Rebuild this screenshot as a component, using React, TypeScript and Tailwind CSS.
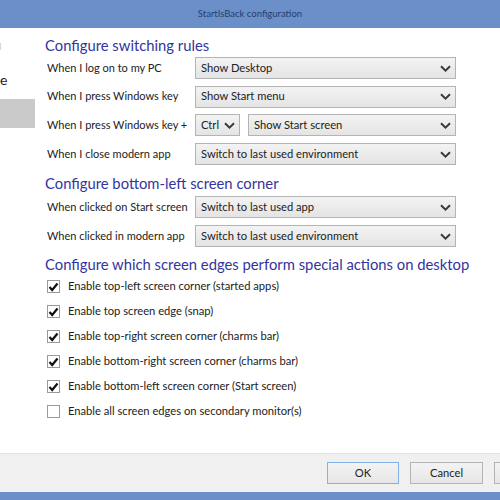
import { ReactNode } from 'react';

const FONT = { fontFamily: 'Lato, "Noto Sans", sans-serif' };

function Chevron() {
  return (
    <svg width="11" height="7" viewBox="0 0 11 7" className="shrink-0">
      <path d="M1 1.2 L5.5 5.6 L10 1.2" fill="none" stroke="#3a3a3a" strokeWidth="2" />
    </svg>
  );
}

function Select({ value, className = '' }: { value: string; className?: string }) {
  return (
    <div
      className={`h-[22px] flex items-center justify-between pl-[5px] pr-[4px] border border-[#b4b4b4] bg-gradient-to-b from-[#f3f3f3] to-[#e4e4e4] text-[11.2px] text-[#222] ${className}`}>
      <span className="whitespace-nowrap">{value}</span>
      <Chevron />
    </div>
  );
}

function Row({ label, children }: { label: string; children: ReactNode }) {
  return (
    <div className="flex items-center h-[22px]">
      <span className="w-[150px] pl-[2px] text-[11px] text-[#222] whitespace-nowrap">{label}</span>
      <div className="flex gap-[8px] w-[261px]">{children}</div>
    </div>
  );
}

function Heading({ children, className = '' }: { children: ReactNode; className?: string }) {
  return (
    <h2 className={`h-[20px] leading-[20px] text-[14.8px] text-[#34349c] whitespace-nowrap ${className}`}>
      {children}
    </h2>
  );
}

function Check({ label, checked }: { label: string; checked: boolean }) {
  return (
    <div className="flex items-center h-[25px] pl-[2px]">
      <div className="w-[13px] h-[13px] border border-[#9a9a9a] bg-white flex items-center justify-center">
        {checked && (
          <svg width="11" height="10" viewBox="0 0 11 10">
            <path d="M1.5 5 L4.2 8 L9.5 1.5" fill="none" stroke="#111" strokeWidth="2.2" />
          </svg>
        )}
      </div>
      <span className="ml-[8px] text-[11.2px] text-[#222] whitespace-nowrap">{label}</span>
    </div>
  );
}

const EDGES = [
  { label: 'Enable top-left screen corner (started apps)', checked: true },
  { label: 'Enable top screen edge (snap)', checked: true },
  { label: 'Enable top-right screen corner (charms bar)', checked: true },
  { label: 'Enable bottom-right screen corner (charms bar)', checked: true },
  { label: 'Enable bottom-left screen corner (Start screen)', checked: true },
  { label: 'Enable all screen edges on secondary monitor(s)', checked: false },
];

export default function App() {
  return (
    <div className="w-[500px] h-[500px] flex flex-col bg-white overflow-hidden" style={FONT}>
      {/* title bar */}
      <div className="h-[28px] shrink-0 bg-[#6b8fc8] flex items-center justify-center">
        <span className="text-[9.5px] text-[#24406e]">StartIsBack configuration</span>
      </div>

      <div className="flex-1 flex">
        {/* left nav, mostly cut off */}
        <div className="w-[35px] shrink-0 flex flex-col text-[14px] text-[#222]">
          <div className="h-[15px]" />
          <div className="w-px h-[7px] bg-[#d6d6d6]" />
          <div className="h-[22px]" />
          <div className="h-[16px] leading-[16px]">e</div>
          <div className="h-[11px]" />
          <div className="h-[29px] bg-[#cacaca]" />
        </div>

        {/* main content */}
        <div className="flex-1 pl-[10px] pt-[7px] flex flex-col">
          <Heading>Configure switching rules</Heading>
          <div className="mt-[2px] flex flex-col gap-[6.7px]">
            <Row label="When I log on to my PC">
              <Select value="Show Desktop" className="flex-1" />
            </Row>
            <Row label="When I press Windows key">
              <Select value="Show Start menu" className="flex-1" />
            </Row>
            <Row label="When I press Windows key +">
              <Select value="Ctrl" className="w-[45px]" />
              <Select value="Show Start screen" className="flex-1" />
            </Row>
            <Row label="When I close modern app">
              <Select value="Switch to last used environment" className="flex-1" />
            </Row>
          </div>

          <Heading className="mt-[8px]">Configure bottom-left screen corner</Heading>
          <div className="mt-[3px] flex flex-col gap-[7px]">
            <Row label="When clicked on Start screen">
              <Select value="Switch to last used app" className="flex-1" />
            </Row>
            <Row label="When clicked in modern app">
              <Select value="Switch to last used environment" className="flex-1" />
            </Row>
          </div>

          <Heading className="mt-[7px]">Configure which screen edges perform special actions on desktop</Heading>
          <div className="flex flex-col">
            {EDGES.map((e) => (
              <Check key={e.label} label={e.label} checked={e.checked} />
            ))}
          </div>
        </div>
      </div>

      {/* footer */}
      <div className="h-[39px] shrink-0 bg-[#f0f0f0] border-t border-[#e2e2e2] flex items-start pt-[8px] pl-[327px] gap-[11px]">
        <button className="w-[72px] h-[22px] shrink-0 border border-[#7fb2e5] bg-gradient-to-b from-[#f3f3f3] to-[#e6e6e6] text-[11.2px] text-[#222]">
          OK
        </button>
        <button className="w-[73px] h-[22px] shrink-0 border border-[#b4b4b4] bg-gradient-to-b from-[#f3f3f3] to-[#e6e6e6] text-[11.2px] text-[#222]">
          Cancel
        </button>
        <button className="w-[73px] h-[22px] shrink-0 border border-[#b4b4b4] bg-gradient-to-b from-[#f3f3f3] to-[#e6e6e6]" />
      </div>
      <div className="h-[8px] shrink-0 bg-[#6b8fc8]" />
    </div>
  );
}
